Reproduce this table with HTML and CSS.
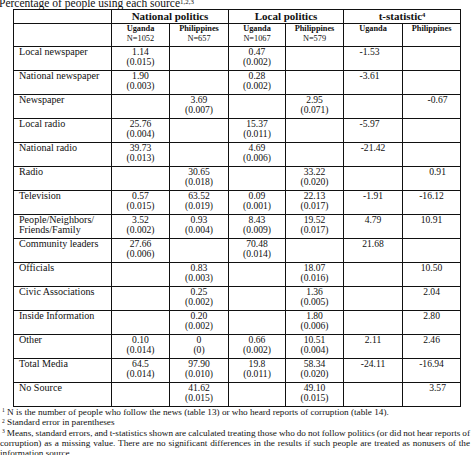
FILE: index.html
```html
<!DOCTYPE html>
<html>
<head>
<meta charset="utf-8">
<link rel="stylesheet" href="styles.css">
</head>
<body>
<div class="page">
  <p class="title">Percentage of people using each source<sup class="sup">1,2,3</sup></p>
  <table class="data">
    <colgroup>
      <col class="c-label"><col class="c-a"><col class="c-b"><col class="c-c"><col class="c-d"><col class="c-e"><col class="c-f">
    </colgroup>
    <thead>
      <tr class="h1">
        <th></th>
        <th colspan="2">National politics</th>
        <th colspan="2">Local politics</th>
        <th colspan="2">t-statistic<sup class="sup">4</sup></th>
      </tr>
      <tr class="h2">
        <th></th>
        <th><b>Uganda</b><br><span class="n">N=1052</span></th>
        <th><b>Philippines</b><br><span class="n">N=657</span></th>
        <th><b>Uganda</b><br><span class="n">N=1067</span></th>
        <th><b>Philippines</b><br><span class="n">N=579</span></th>
        <th><b>Uganda</b></th>
        <th><b>Philippines</b></th>
      </tr>
    </thead>
    <tbody>
      <tr><td class="label">Local newspaper</td><td>1.14<br>(0.015)</td><td></td><td>0.47<br>(0.002)</td><td></td><td class="shift-l">-1.53</td><td></td></tr>
      <tr><td class="label">National newspaper</td><td>1.90<br>(0.003)</td><td></td><td>0.28<br>(0.002)</td><td></td><td class="shift-l">-3.61</td><td></td></tr>
      <tr><td class="label">Newspaper</td><td></td><td>3.69<br>(0.007)</td><td></td><td>2.95<br>(0.071)</td><td></td><td class="shift-r">-0.67</td></tr>
      <tr><td class="label">Local radio</td><td>25.76<br>(0.004)</td><td></td><td>15.37<br>(0.011)</td><td></td><td class="shift-l">-5.97</td><td></td></tr>
      <tr><td class="label">National radio</td><td>39.73<br>(0.013)</td><td></td><td>4.69<br>(0.006)</td><td></td><td>-21.42</td><td></td></tr>
      <tr><td class="label">Radio</td><td></td><td>30.65<br>(0.018)</td><td></td><td>33.22<br>(0.020)</td><td></td><td class="shift-r">0.91</td></tr>
      <tr><td class="label">Television</td><td>0.57<br>(0.015)</td><td>63.52<br>(0.019)</td><td>0.09<br>(0.001)</td><td>22.13<br>(0.017)</td><td>-1.91</td><td>-16.12</td></tr>
      <tr><td class="label">People/Neighbors/<br>Friends/Family</td><td>3.52<br>(0.002)</td><td>0.93<br>(0.004)</td><td>8.43<br>(0.009)</td><td>19.52<br>(0.017)</td><td>4.79</td><td>10.91</td></tr>
      <tr><td class="label">Community leaders</td><td>27.66<br>(0.006)</td><td></td><td>70.48<br>(0.014)</td><td></td><td>21.68</td><td></td></tr>
      <tr><td class="label">Officials</td><td></td><td>0.83<br>(0.003)</td><td></td><td>18.07<br>(0.016)</td><td></td><td>10.50</td></tr>
      <tr><td class="label">Civic Associations</td><td></td><td>0.25<br>(0.002)</td><td></td><td>1.36<br>(0.005)</td><td></td><td>2.04</td></tr>
      <tr><td class="label">Inside Information</td><td></td><td>0.20<br>(0.002)</td><td></td><td>1.80<br>(0.006)</td><td></td><td>2.80</td></tr>
      <tr><td class="label">Other</td><td>0.10<br>(0.014)</td><td>0<br>(0)</td><td>0.66<br>(0.002)</td><td>10.51<br>(0.004)</td><td>2.11</td><td>2.46</td></tr>
      <tr><td class="label">Total Media</td><td>64.5<br>(0.014)</td><td>97.90<br>(0.010)</td><td>19.8<br>(0.011)</td><td>58.34<br>(0.020)</td><td>-24.11</td><td>-16.94</td></tr>
      <tr><td class="label">No Source</td><td></td><td>41.62<br>(0.015)</td><td></td><td>49.10<br>(0.015)</td><td></td><td class="shift-r">3.57</td></tr>
    </tbody>
  </table>
  <div class="notes">
    <div class="note"><sup class="sup">1</sup> N is the number of people who follow the news (table 13) or who heard reports of corruption (table 14).</div>
    <div class="note"><sup class="sup">2</sup> Standard error in parentheses</div>
    <div class="note just"><sup class="sup">3</sup> Means, standard errors, and t-statistics shown are calculated treating those who do not follow politics (or did not hear reports of</div>
    <div class="note just">corruption) as a missing value. There are no significant differences in the results if such people are treated as nonusers of the</div>
    <div class="note">information source</div>
  </div>
</div>
</body>
</html>
```
FILE: styles.css
```css
html, body {
  margin: 0;
  padding: 0;
  background: #fff;
}
body {
  font-family: "Liberation Serif", "Times New Roman", serif;
  color: #111;
  overflow: hidden;
}
.page {
  width: 474px;
  height: 455px;
  overflow: hidden;
}
.title {
  margin: -2px 0 0 -1px;
  font-size: 11.5px;
  line-height: 11px;
  height: 11px;
  white-space: nowrap;
}
.sup {
  font-size: 0.6em;
  vertical-align: 0.5em;
  line-height: 0;
}
.data {
  margin-left: 13px;
  border-collapse: collapse;
  table-layout: fixed;
  width: 448px;
}
.c-label { width: 98px; }
.c-a { width: 58px; }
.c-b { width: 59px; }
.c-c { width: 57px; }
.c-d { width: 58px; }
.c-e { width: 59px; }
.c-f { width: 58px; }
.data th, .data td {
  border: 1px solid #111;
  padding: 0;
  vertical-align: top;
  text-align: center;
}
.h1 { height: 14px; }
.h1 th {
  font-size: 11px;
  line-height: 13px;
  font-weight: bold;
}
.h2 { height: 23px; }
.h2 th {
  font-size: 8.3px;
  line-height: 10px;
  font-weight: normal;
}
.data tbody tr { height: 24px; }
.data td {
  font-size: 9.6px;
  line-height: 10px;
}
.data td.label {
  text-align: left;
  padding-left: 5px;
  font-size: 10.1px;
}
.data td.shift-l { padding-right: 7px; }
.data td.shift-r { padding-left: 12px; }
.notes {
  width: 470px;
  font-size: 9.2px;
  line-height: 10.3px;
}
.note {
  white-space: nowrap;
}
.note .sup {
  padding-left: 2px;
}
.note.just {
  text-align: justify;
  text-align-last: justify;
  word-spacing: -0.9px;
}
```
